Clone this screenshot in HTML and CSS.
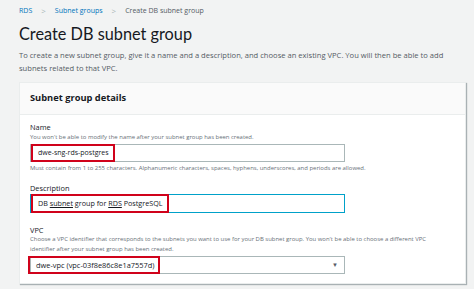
FILE: index.html
```html
<!DOCTYPE html>
<html>
<head>
<meta charset="utf-8">
<link rel="stylesheet" href="styles.css">
</head>
<body>
<div class="page">
  <nav class="crumbs">
    <a class="crumb-link">RDS</a>
    <span class="sep">&gt;</span>
    <a class="crumb-link">Subnet groups</a>
    <span class="sep">&gt;</span>
    <span class="crumb-current">Create DB subnet group</span>
  </nav>
  <h1 class="title">Create DB subnet group</h1>
  <p class="intro">To create a new subnet group, give it a name and a description, and choose an existing VPC. You will then be able to add subnets related to that VPC.</p>

  <section class="card">
    <header class="card-head">Subnet group details</header>
    <div class="card-body">
      <div class="field field-name">
        <div class="label">Name</div>
        <div class="hint">You won't be able to modify the name after your subnet group has been created.</div>
        <div class="input"><span class="mark mark-name">dwe-sng-rds-postgres</span></div>
        <div class="hint hint-after">Must contain from 1 to 255 characters. Alphanumeric characters, spaces, hyphens, underscores, and periods are allowed.</div>
      </div>
      <div class="field field-desc">
        <div class="label">Description</div>
        <div class="input input-focus"><span class="mark mark-desc">DB <u>subnet</u> group for <u>RDS</u> PostgreSQL</span></div>
      </div>
      <div class="field field-vpc">
        <div class="label">VPC</div>
        <div class="hint hint-wide">Choose a VPC identifier that corresponds to the subnets you want to use for your DB subnet group. You won't be able to choose a different VPC identifier after your subnet group has been created.</div>
        <div class="input select"><span class="mark mark-vpc">dwe-vpc (vpc-03f8e86c8e1a7557d)</span><span class="caret">&#9660;</span></div>
      </div>
    </div>
  </section>
</div>
</body>
</html>
```
FILE: styles.css
```css
* { box-sizing: border-box; }
html, body { margin: 0; padding: 0; }
body {
  background: #f2f3f3;
  font-family: "Open Sans", "Noto Sans", sans-serif;
  color: #16191f;
  width: 474px;
  height: 289px;
  overflow: hidden;
}
.page { padding: 4px 0 0 19px; }
.crumbs {
  display: flex;
  align-items: center;
  gap: 7px;
  font-size: 7px;
  height: 12px;
  color: #687078;
}
.crumb-link { color: #0073bb; }
.sep { color: #aab7b8; font-size: 8px; margin: 0 2px; }
.crumb-current { color: #545b64; }
.title {
  margin: 7px 0 0 0;
  font-family: "Lato", "Open Sans", sans-serif;
  font-size: 16.3px;
  font-weight: 400;
  line-height: 22px;
}
.intro {
  margin: 4px 0 0 0;
  font-size: 7.6px;
  line-height: 13px;
  color: #545b64;
  width: 435px;
}
.card {
  margin-top: 7px;
  width: 447px;
  background: #fff;
  border: 1px solid #eaeded;
  box-shadow: 1px 1px 1px rgba(0,28,36,0.3);
}
.card-head {
  height: 32px;
  padding: 8px 10px 0;
  background: #fafafa;
  border-bottom: 1px solid #eaeded;
  font-size: 9.3px;
  font-weight: 700;
  line-height: 14px;
}
.card-body { padding: 7px 10px 9px; }
.field-name { margin-bottom: 10px; }
.field-desc { margin-bottom: 12px; }
.label { font-size: 7.4px; line-height: 10px; color: #16191f; }
.hint { font-size: 5.95px; line-height: 10px; color: #687078; }
.hint-after { margin-top: 1px; }
.hint-wide { width: 422px; line-height: 9.5px; }
.input {
  margin-top: 2px;
  width: 315px;
  height: 18px;
  border: 1px solid #aab7b8;
  background: #fff;
  display: flex;
  align-items: stretch;
}
.input-focus { border-color: #00a1c9; height: 19px; margin-top: 1px; }
.select { justify-content: space-between; }
.mark {
  display: block;
  border: 2px solid #d0021b;
  margin: -1px 0 -1px 0;
  padding: 0 4px 0 5px;
  font-size: 7px;
  line-height: 14px;
  white-space: nowrap;
  color: #16191f;
}
.mark-desc { font-size: 7.2px; line-height: 15px; }
.mark-vpc { margin-left: -3px; padding-left: 6px; padding-right: 4px; font-size: 7.4px; }
.caret { font-size: 6px; color: #545b64; align-self: center; margin-right: 6px; }
```
